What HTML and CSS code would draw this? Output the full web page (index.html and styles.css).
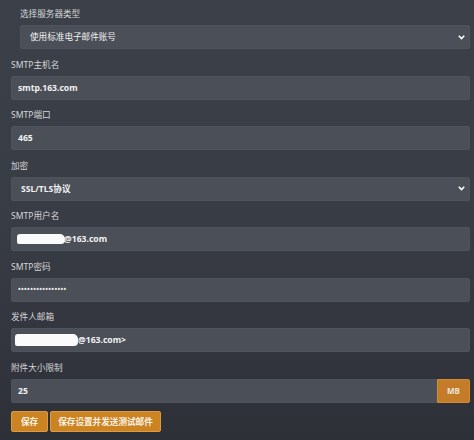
FILE: index.html
```
<!DOCTYPE html>
<html lang="zh">
<head>
<meta charset="utf-8">
<link rel="stylesheet" href="styles.css">
</head>
<body>
<form class="form">
  <div class="group indent">
    <div class="label">选择服务器类型</div>
    <div class="control select"><span class="val light">使用标准电子邮件账号</span><svg class="chev" width="7" height="5" viewBox="0 0 7 5"><path d="M0.8 0.8 L3.5 3.6 L6.2 0.8" fill="none" stroke="#fff" stroke-width="1.6"/></svg></div>
  </div>
  <div class="group">
    <div class="label">SMTP主机名</div>
    <div class="control"><span class="val">smtp.163.com</span></div>
  </div>
  <div class="group">
    <div class="label">SMTP端口</div>
    <div class="control"><span class="val">465</span></div>
  </div>
  <div class="group">
    <div class="label">加密</div>
    <div class="control select"><span class="val">SSL/TLS协议</span><svg class="chev" width="7" height="5" viewBox="0 0 7 5"><path d="M0.8 0.8 L3.5 3.6 L6.2 0.8" fill="none" stroke="#fff" stroke-width="1.6"/></svg></div>
  </div>
  <div class="group">
    <div class="label">SMTP用户名</div>
    <div class="control"><span class="blob b1"></span><span class="val">@163.com</span></div>
  </div>
  <div class="group">
    <div class="label">SMTP密码</div>
    <div class="control"><span class="dots">••••••••••••••••</span></div>
  </div>
  <div class="group">
    <div class="label">发件人邮箱</div>
    <div class="control"><span class="blob b2"></span><span class="val">@163.com&gt;</span></div>
  </div>
  <div class="group">
    <div class="label">附件大小限制</div>
    <div class="inputgroup">
      <div class="control grow"><span class="val">25</span></div>
      <div class="addon">MB</div>
    </div>
  </div>
  <div class="actions">
    <button type="button" class="btn">保存</button>
    <button type="button" class="btn wide">保存设置并发送测试邮件</button>
  </div>
</form>
</body>
</html>
```
FILE: styles.css
```
html, body {
  margin: 0;
  padding: 0;
}
body {
  width: 474px;
  height: 440px;
  overflow: hidden;
  background: linear-gradient(180deg, #3c4149 0%, #383c45 50%, #2e3038 100%);
  font-family: "Noto Sans", "Noto Sans CJK SC", sans-serif;
  color: #d6d7d9;
}
.form {
  padding: 7px 4px 0 11px;
}
.group {
  margin-bottom: 8.5px;
}
.indent {
  padding-left: 9px;
}
.label {
  font-size: 8.6px;
  line-height: 15px;
  height: 15px;
  margin-bottom: 3px;
  color: #d4d5d8;
  white-space: nowrap;
}
.control {
  height: 24px;
  box-sizing: border-box;
  background: #4a4f58;
  border: 1px solid #4e535c;
  border-radius: 2px;
  display: flex;
  align-items: center;
  padding-left: 6px;
  font-size: 8.6px;
  font-weight: 700;
  color: #f2f2f2;
  white-space: nowrap;
}
.select {
  padding-left: 9px;
  padding-right: 4px;
}
.val {
  line-height: 12px;
}
.light {
  font-weight: 400;
}
.chev {
  margin-left: auto;
}
.blob {
  display: inline-block;
  background: #fbfbfb;
  border-radius: 3px 5px 4px 2px;
  height: 10px;
}
.b1 {
  width: 48px;
  margin-left: -1px;
  margin-right: -1px;
}
.b2 {
  width: 63px;
  margin-left: -3px;
  height: 12px;
}
.dots {
  font-size: 7px;
  letter-spacing: 0.4px;
  font-weight: 700;
  color: #ececec;
}
.inputgroup {
  display: flex;
}
.grow {
  flex: 1;
  border-radius: 2px 0 0 2px;
}
.addon {
  width: 33px;
  height: 24px;
  box-sizing: border-box;
  background: #c47c28;
  border: 1px solid #d08a35;
  border-radius: 0 2px 2px 0;
  display: flex;
  align-items: center;
  justify-content: center;
  font-size: 8px;
  font-weight: 700;
  color: #ece4d8;
}
.actions {
  display: flex;
  gap: 2px;
  margin-top: 4.5px;
}
.btn {
  height: 21px;
  box-sizing: border-box;
  background: #cc8322;
  border: 1px solid #dc9a42;
  border-radius: 2px;
  color: #fbf1e2;
  font-family: "Noto Sans", "Noto Sans CJK SC", sans-serif;
  font-size: 8.6px;
  font-weight: 700;
  padding: 0;
  width: 37px;
  display: flex;
  align-items: center;
  justify-content: center;
}
.wide {
  width: 111px;
}
```
